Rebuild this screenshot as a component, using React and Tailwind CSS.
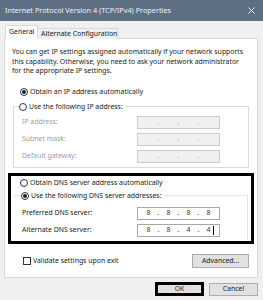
import React from "react";

const font = { fontFamily: '"Noto Sans", "Open Sans", sans-serif' };

function Radio({ checked, label, disabled }) {
  return (
    <span className="flex items-center h-[12px] bg-white pr-[2px]">
      <span className="w-[8px] h-[8px] rounded-full border border-[#333] bg-white flex items-center justify-center">
        {checked && <span className="w-[4px] h-[4px] rounded-full bg-[#222]" />}
      </span>
      <span className={"ml-[2px] whitespace-nowrap " + (disabled ? "text-[#9a9a9a]" : "text-[#222]")}>{label}</span>
    </span>
  );
}

function IpField({ values, disabled, caret }) {
  return (
    <div
      className={
        "w-[83px] h-[13px] border flex items-center justify-around px-[4px] " +
        (disabled ? "bg-[#f0f0f0] border-[#cccccc] text-[#9a9a9a]" : "bg-white border-[#a8a8a8] text-[#333]")
      }
    >
      {values.map((v, i) => (
        <React.Fragment key={i}>
          <span className="w-[10px] text-center relative">
            {v}
            {caret && i === 3 && <span className="absolute right-[0px] top-[1px] w-px h-[9px] bg-black" />}
          </span>
          {i < 3 && <span className="w-[4px] text-center">.</span>}
        </React.Fragment>
      ))}
    </div>
  );
}

function Row({ label, children, disabled }) {
  return (
    <div className="flex items-center h-[13px]">
      <span className={"w-[115px] whitespace-nowrap " + (disabled ? "text-[#a0a0a0]" : "text-[#222]")}>{label}</span>
      {children}
    </div>
  );
}

export default function App() {
  return (
    <div className="w-[263px] h-[300px] bg-[#f0f0f0] overflow-hidden text-[6.9px] leading-[9.5px]" style={font}>
      {/* title bar */}
      <div className="h-[21px] bg-[#5e6f83] flex items-center justify-between pl-[5px] pr-[7px] text-[#eef1f5] text-[7.3px]">
        <span className="whitespace-nowrap">Internet Protocol Version 4 (TCP/IPv4) Properties</span>
        <svg width="7" height="7" viewBox="0 0 7 7" className="mr-[1px]">
          <path d="M0.5 0.5 L6.5 6.5 M6.5 0.5 L0.5 6.5" stroke="#e6eaef" strokeWidth="1" />
        </svg>
      </div>

      {/* tabs */}
      <div className="flex items-end ml-[5px] mt-[4px] h-[14px] relative z-10">
        <div className="w-[33px] h-[14px] bg-white border border-b-0 border-[#d9d9d9] flex items-start pt-[1px] pl-[3px] text-[#222] whitespace-nowrap">
          General
        </div>
        <div className="w-[80px] h-[11px] bg-[#f0f0f0] border border-l-0 border-b-0 border-[#d9d9d9] flex items-center pl-[3px] text-[#222] whitespace-nowrap">
          Alternate Configuration
        </div>
      </div>

      {/* panel */}
      <div className="ml-[4px] w-[254px] h-[240px] -mt-[1px] bg-white border border-[#d9d9d9] flex flex-col">
        <p className="ml-[7px] mt-[8px] text-[#222] whitespace-nowrap">
          You can get IP settings assigned automatically if your network supports
          <br />
          this capability. Otherwise, you need to ask your network administrator
          <br />
          for the appropriate IP settings.
        </p>

        <div className="ml-[15px] mt-[10px]">
          <Radio checked label="Obtain an IP address automatically" />
        </div>

        <fieldset className="ml-[8px] mt-[3px] w-[236px] border border-[#dcdcdc] pl-[5px] pb-[4px]">
          <legend>
            <Radio label="Use the following IP address:" />
          </legend>
          <div className="ml-[3px] mt-[3px] flex flex-col gap-[4px]">
            <Row label="IP address:" disabled>
              <IpField values={["", "", "", ""]} disabled />
            </Row>
            <Row label="Subnet mask:" disabled>
              <IpField values={["", "", "", ""]} disabled />
            </Row>
            <Row label="Default gateway:" disabled>
              <IpField values={["", "", "", ""]} disabled />
            </Row>
          </div>
        </fieldset>

        {/* highlighted DNS section */}
        <div className="ml-[3px] mt-[5px] w-[246px] h-[71px] border-[3px] border-black flex flex-col">
          <div className="ml-[9px] mt-[1px]">
            <Radio label="Obtain DNS server address automatically" />
          </div>
          <fieldset className="ml-[2px] mt-[1px] w-[235px] border border-[#e4e4e4] border-l-transparent border-b-transparent pl-[7px] pb-[3px]">
            <legend>
              <Radio checked label="Use the following DNS server addresses:" />
            </legend>
            <div className="ml-[1px] mt-[5px] flex flex-col gap-[4px]">
              <Row label="Preferred DNS server:">
                <IpField values={["8", "8", "8", "8"]} />
              </Row>
              <Row label="Alternate DNS server:">
                <IpField values={["8", "8", "4", "4"]} caret />
              </Row>
            </div>
          </fieldset>
        </div>

        <div className="mt-[10px] h-[14px] flex items-center justify-between pl-[18px] pr-[8px]">
          <div className="flex items-center">
            <span className="w-[8px] h-[8px] border border-[#333] bg-white" />
            <span className="ml-[2px] text-[#222]">Validate settings upon exit</span>
          </div>
          <div className="w-[57px] h-[14px] bg-[#e1e1e1] border border-[#adadad] flex items-center justify-center text-[#222]">
            Advanced...
          </div>
        </div>
      </div>

      {/* bottom buttons */}
      <div className="mt-[4px] flex justify-end items-center gap-[5px] pr-[5px]">
        <div className="w-[49px] h-[14px] bg-[#e1e1e1] border-[3px] border-black flex items-center justify-center text-[#222]">
          OK
        </div>
        <div className="w-[49px] h-[13px] bg-[#e1e1e1] border border-[#adadad] flex items-center justify-center text-[#222]">
          Cancel
        </div>
      </div>
    </div>
  );
}
